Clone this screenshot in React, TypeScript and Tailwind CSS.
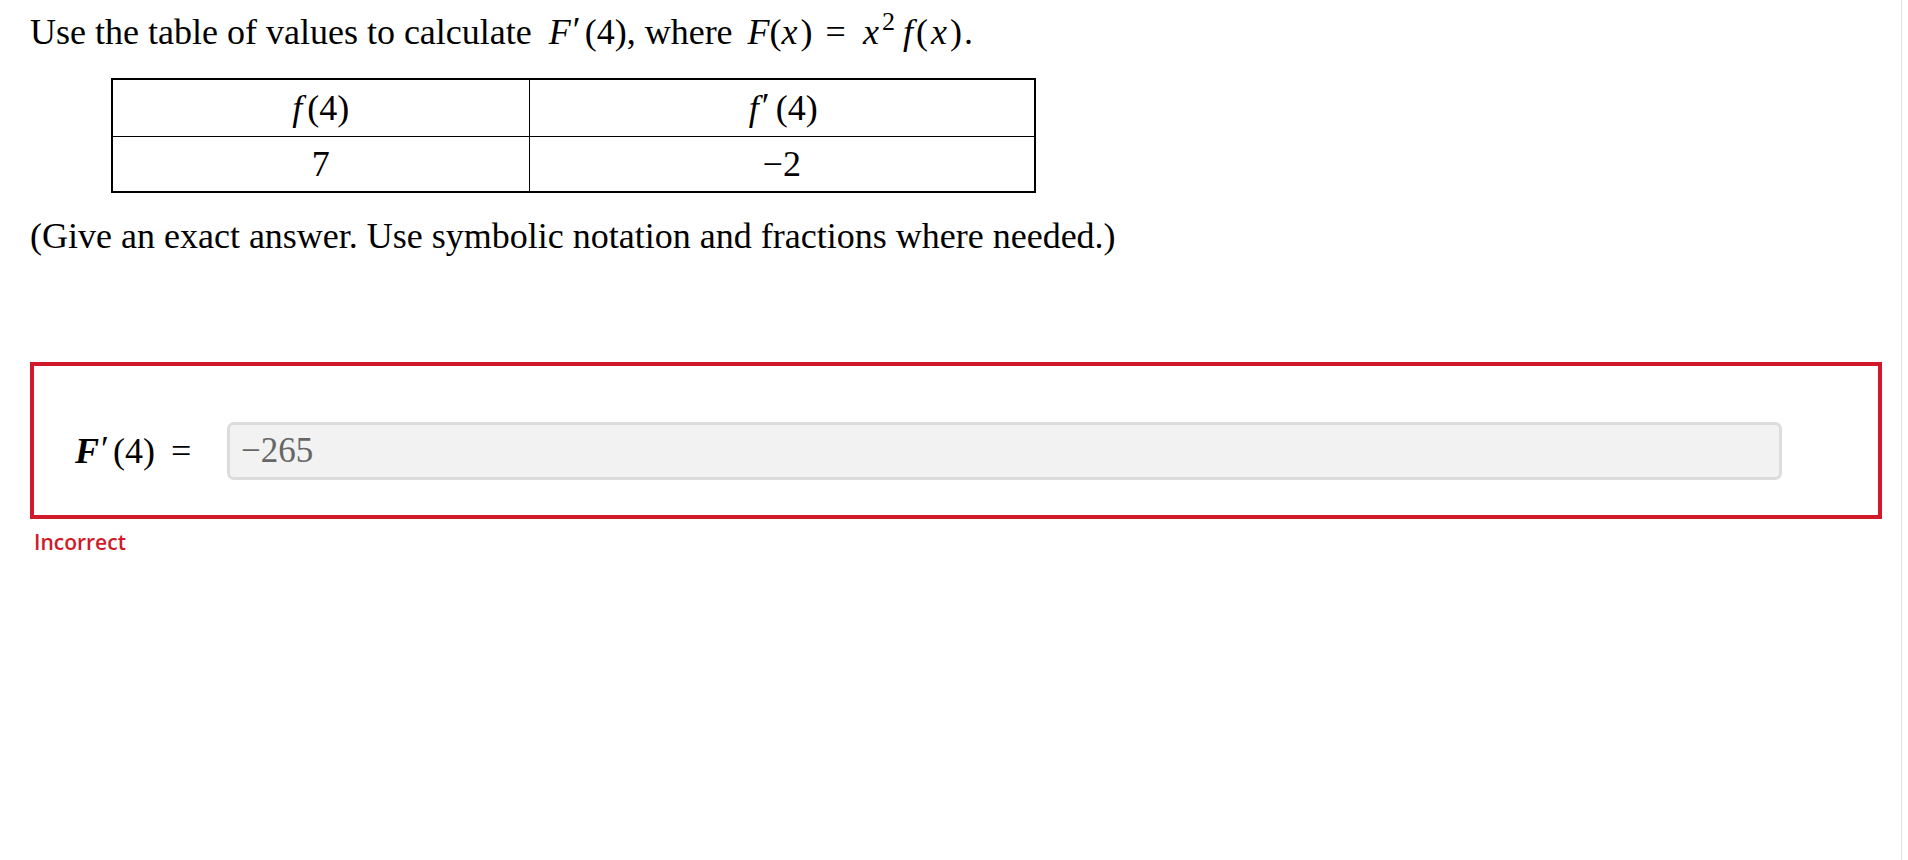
import React from "react"

const serif = "font-['Liberation_Serif','Times_New_Roman',serif]"

function Prime() {
  return <span className="not-italic relative -top-[2px] ml-[2px] mr-[4px]">′</span>
}

function V({ children, wide }: { children: React.ReactNode; wide?: boolean }) {
  return <i className={wide ? "mx-[3px]" : "mr-[3px]"}>{children}</i>
}

export default function App() {
  return (
    <div className={`w-[1908px] h-[860px] bg-white flex text-black ${serif}`}>
      <div className="flex-1 pl-[30px] pr-[19px] pt-[11px]">
        <p className="text-[36px] leading-[42px]">
          Use the table of values to calculate <i className="ml-[8px]">F</i>
          <Prime />(4), where <i className="ml-[6px]">F</i>(<V>x</V>)<span className="mx-[13px]">=</span>
          <i className="ml-[4px]">x</i>
          <sup className="text-[26px] relative -top-[14px] ml-[3px] mr-[8px]">2</sup>
          <V>f</V>(<V wide>x</V>)<span className="ml-[2px]">.</span>
        </p>

        <table className="ml-[81px] mt-[25px] w-[925px] border-collapse border-2 border-black text-[36px] leading-[42px]">
          <tbody>
            <tr className="h-[57px]">
              <td className="w-[417px] border border-black text-center">
                <i className="mr-[5px]">f</i>(4)
              </td>
              <td className="border border-black text-center">
                <i className="ml-[3px]">f</i>
                <span className="not-italic relative -top-[2px] ml-[3px] mr-[6px]">′</span>(4)
              </td>
            </tr>
            <tr className="h-[56px]">
              <td className="border border-black text-center">7</td>
              <td className="border border-black text-center">−2</td>
            </tr>
          </tbody>
        </table>

        <p className="mt-[22px] text-[36px] leading-[42px]">
          (Give an exact answer. Use symbolic notation and fractions where needed.)
        </p>

        <div className="mt-[105px] border-4 border-[#d0192a] pt-[56px] pb-[35px] pl-[41px] pr-[96px] flex items-center">
          <div className="w-[152px] shrink-0 text-[36px] leading-[42px]">
            <i className="font-bold">F</i>
            <Prime />(4)<span className="ml-[16px]">=</span>
          </div>
          <div className="flex-1 h-[58px] rounded-[7px] border-[3px] border-[#dcdcdc] bg-[#f2f2f2] flex items-center pl-[11px] text-[35px] text-[#666]">
            −265
          </div>
        </div>

        <div className="mt-[9px] pl-[4px] font-['Open_Sans',sans-serif] font-semibold text-[21px] leading-[28px] text-[#d0192a]">
          Incorrect
        </div>
      </div>
      <div className="w-[7px] border-l border-[#e2e2e2] bg-white" />
    </div>
  )
}
